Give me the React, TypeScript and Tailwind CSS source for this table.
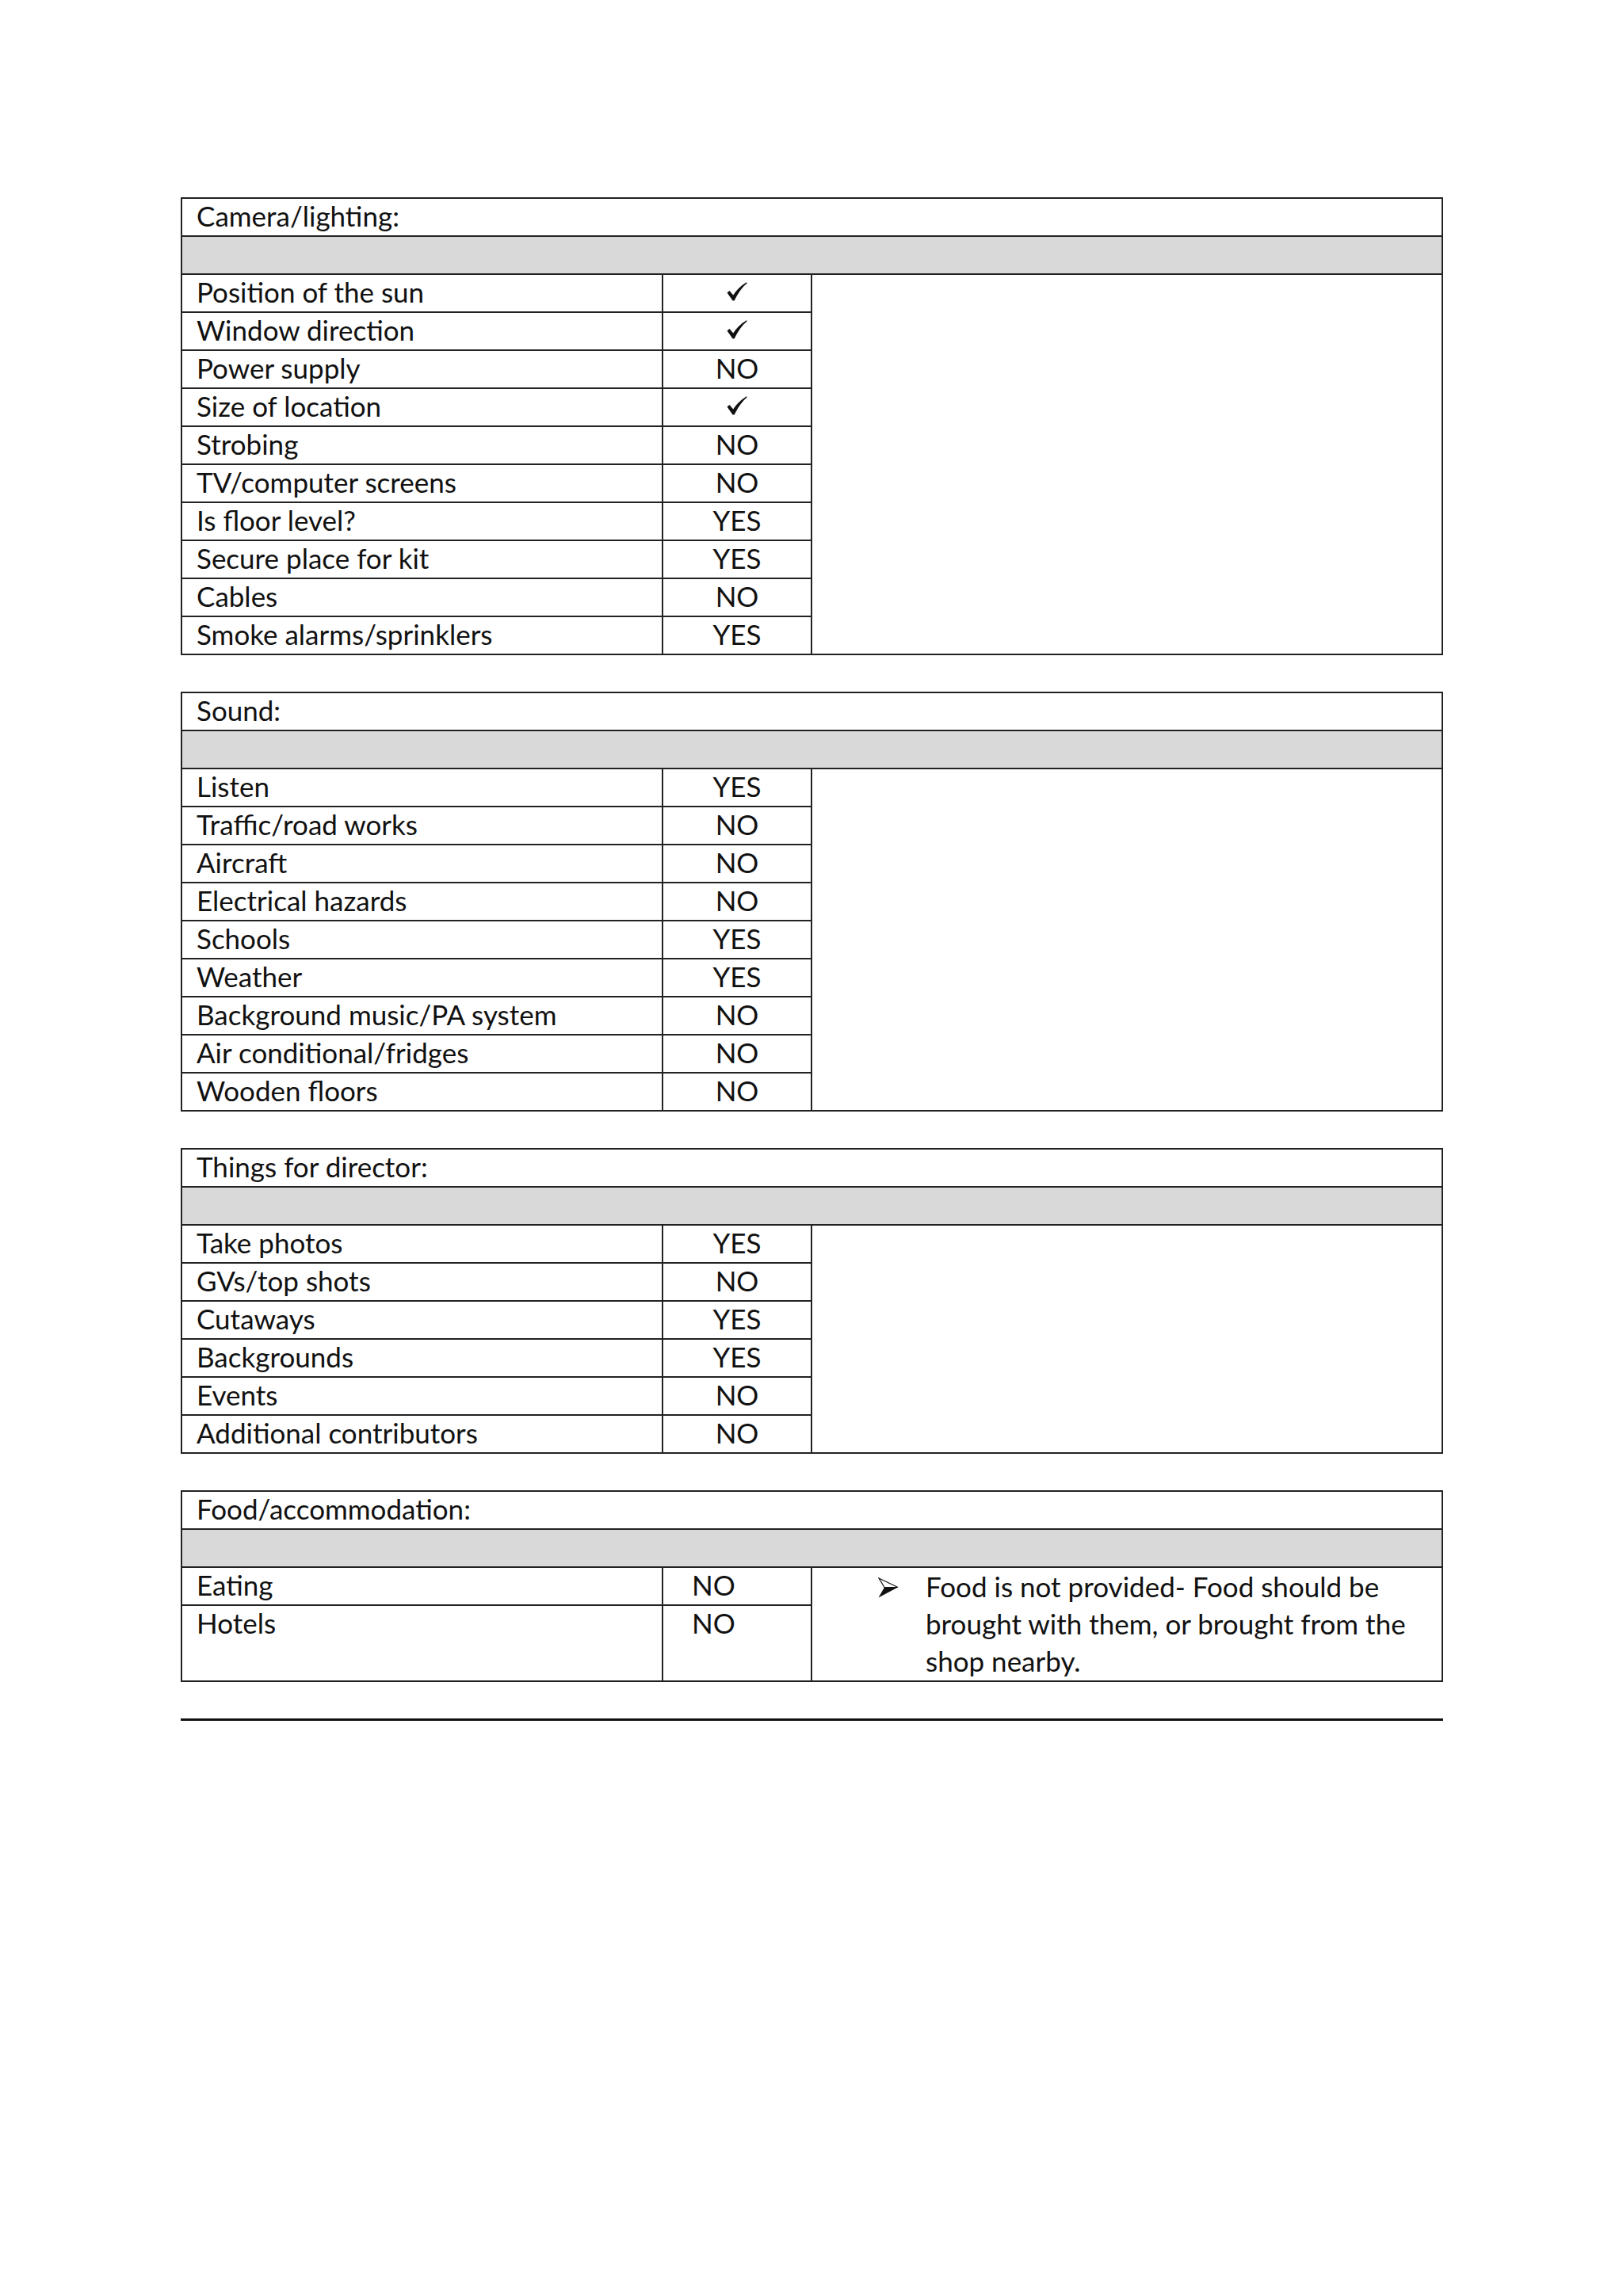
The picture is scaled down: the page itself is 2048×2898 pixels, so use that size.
import React from 'react'

type Row = { label: string; value: string }

const camera: Row[] = [
  { label: 'Position of the sun', value: 'check' },
  { label: 'Window direction', value: 'check' },
  { label: 'Power supply', value: 'NO' },
  { label: 'Size of location', value: 'check' },
  { label: 'Strobing', value: 'NO' },
  { label: 'TV/computer screens', value: 'NO' },
  { label: 'Is floor level?', value: 'YES' },
  { label: 'Secure place for kit', value: 'YES' },
  { label: 'Cables', value: 'NO' },
  { label: 'Smoke alarms/sprinklers', value: 'YES' },
]

const sound: Row[] = [
  { label: 'Listen', value: 'YES' },
  { label: 'Traffic/road works', value: 'NO' },
  { label: 'Aircraft', value: 'NO' },
  { label: 'Electrical hazards', value: 'NO' },
  { label: 'Schools', value: 'YES' },
  { label: 'Weather', value: 'YES' },
  { label: 'Background music/PA system', value: 'NO' },
  { label: 'Air conditional/fridges', value: 'NO' },
  { label: 'Wooden floors', value: 'NO' },
]

const director: Row[] = [
  { label: 'Take photos', value: 'YES' },
  { label: 'GVs/top shots', value: 'NO' },
  { label: 'Cutaways', value: 'YES' },
  { label: 'Backgrounds', value: 'YES' },
  { label: 'Events', value: 'NO' },
  { label: 'Additional contributors', value: 'NO' },
]

const font = { fontFamily: 'Lato, "Open Sans", sans-serif' }

// calligraphic tick, like the Wingdings one in the source doc
function Tick() {
  return (
    <svg width="26" height="24" viewBox="0 0 26 24" className="inline-block">
      <path
        d="M0.5 13.5 L3.5 11 L8.2 16.6 Q14 7 25 0.2 L25.8 1.2 Q16.5 9 9.6 23.5 L7.6 23.5 Z"
        fill="#111"
      />
    </svg>
  )
}

function ArrowBullet() {
  return (
    <svg width="26" height="26" viewBox="0 0 26 26">
      <path d="M1 1 L25 12.5 L8 12.5 Z" fill="#fff" stroke="#111" strokeWidth="1.2" strokeLinejoin="miter" />
      <path d="M8 12.5 L25 12.5 L0.5 25.5 Z" fill="#111" />
    </svg>
  )
}

function Value({ value }: { value: string }) {
  if (value === 'check') {
    return (
      <div className="flex h-full items-start justify-center pt-[9px]">
        <Tick />
      </div>
    )
  }
  return <span>{value}</span>
}

function Header({ title }: { title: string }) {
  return (
    <>
      <div className="h-[48px] border-b-2 border-[#222] pl-[18px] leading-[43px]">{title}</div>
      <div className="h-[48px] border-b-2 border-[#222] bg-[#d9d9d9]" />
    </>
  )
}

function Section({ title, rows }: { title: string; rows: Row[] }) {
  return (
    <div className="w-[1593px] border-2 border-[#222]">
      <Header title={title} />
      <div className="flex">
        <div className="w-[607px] border-r-2 border-[#222]">
          {rows.map((r, i) => (
            <div
              key={r.label}
              className={
                i === rows.length - 1
                  ? 'h-[46px] pl-[18px] leading-[43px]'
                  : 'h-[48px] border-b-2 border-[#222] pl-[18px] leading-[43px]'
              }
            >
              {r.label}
            </div>
          ))}
        </div>
        <div className="w-[188px] border-r-2 border-[#222]">
          {rows.map((r, i) => (
            <div
              key={r.label}
              className={
                i === rows.length - 1
                  ? 'h-[46px] text-center leading-[43px]'
                  : 'h-[48px] border-b-2 border-[#222] text-center leading-[43px]'
              }
            >
              <Value value={r.value} />
            </div>
          ))}
        </div>
        <div className="flex-1" />
      </div>
    </div>
  )
}

function FoodSection() {
  return (
    <div className="w-[1593px] border-2 border-[#222]">
      <Header title="Food/accommodation:" />
      <div className="flex">
        <div className="w-[607px] border-r-2 border-[#222]">
          <div className="h-[48px] border-b-2 border-[#222] pl-[18px] leading-[43px]">Eating</div>
          <div className="h-[94px] pl-[18px] leading-[43px]">Hotels</div>
        </div>
        <div className="w-[188px] border-r-2 border-[#222]">
          <div className="h-[48px] border-b-2 border-[#222] pl-[36px] leading-[43px]">NO</div>
          <div className="h-[94px] pl-[36px] leading-[43px]">NO</div>
        </div>
        <div className="flex flex-1 pl-[83px] leading-[47px]">
          <div className="w-[60px] shrink-0 pt-[12px]">
            <ArrowBullet />
          </div>
          <p>
            Food is not provided- Food should be
            <br />
            brought with them, or brought from the
            <br />
            shop nearby.
          </p>
        </div>
      </div>
    </div>
  )
}

export default function App() {
  return (
    <div className="min-h-[2898px] bg-white pt-[249px] pl-[228px] text-[35px] text-[#111]" style={font}>
      <div className="flex flex-col gap-[46px]">
        <Section title="Camera/lighting:" rows={camera} />
        <Section title="Sound:" rows={sound} />
        <Section title="Things for director:" rows={director} />
        <FoodSection />
        <div className="h-[3px] w-[1593px] bg-[#111]" />
      </div>
    </div>
  )
}
